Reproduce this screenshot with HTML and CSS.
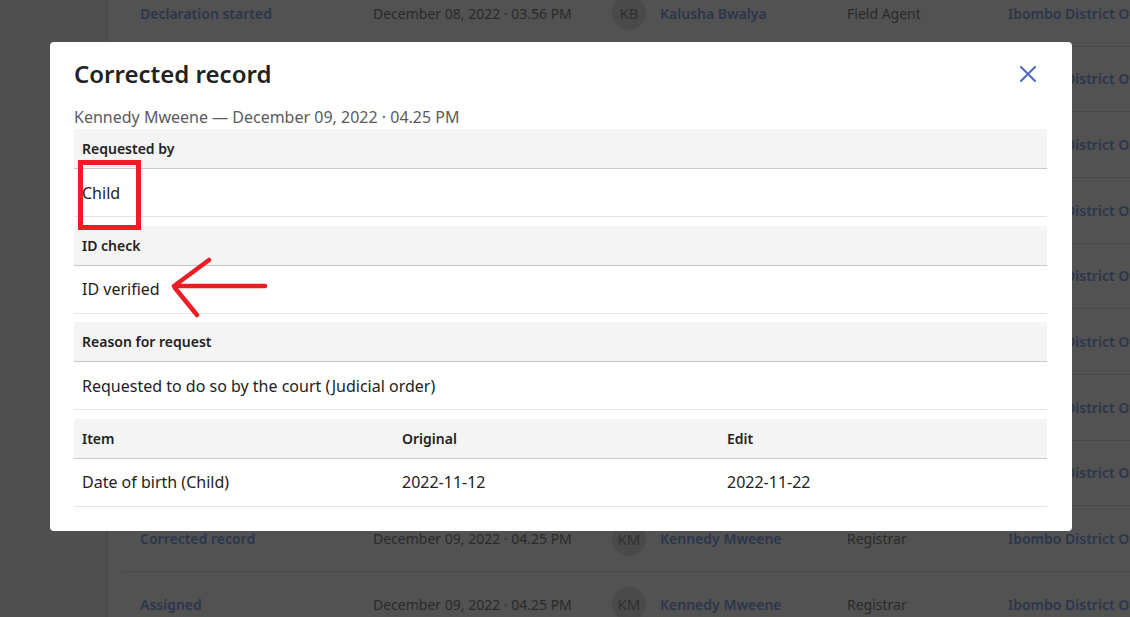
FILE: index.html
```html
<!DOCTYPE html>
<html lang="en">
<head>
<meta charset="utf-8">
<title>Corrected record</title>
<link rel="stylesheet" href="styles.css">
</head>
<body>
<div class="page">
  <aside class="sidebar"></aside>
  <main class="history">
    <div class="list">
      <div class="hrow"><span class="act">Declaration started</span><span class="date">December 08, 2022 · 03.56 PM</span><span class="avatar">KB</span><span class="name">Kalusha Bwalya</span><span class="role">Field Agent</span><span class="office">Ibombo District Office</span></div>
      <div class="hrow"><span class="act">Sent for review</span><span class="date">December 08, 2022 · 04.01 PM</span><span class="avatar">KB</span><span class="name">Kalusha Bwalya</span><span class="role">Field Agent</span><span class="office">Ibombo District Office</span></div>
      <div class="hrow"><span class="act">Assigned</span><span class="date">December 09, 2022 · 04.20 PM</span><span class="avatar">KM</span><span class="name">Kennedy Mweene</span><span class="role">Registrar</span><span class="office">Ibombo District Office</span></div>
      <div class="hrow"><span class="act">Registered</span><span class="date">December 09, 2022 · 04.21 PM</span><span class="avatar">KM</span><span class="name">Kennedy Mweene</span><span class="role">Registrar</span><span class="office">Ibombo District Office</span></div>
      <div class="hrow"><span class="act">Assigned</span><span class="date">December 09, 2022 · 04.22 PM</span><span class="avatar">KM</span><span class="name">Kennedy Mweene</span><span class="role">Registrar</span><span class="office">Ibombo District Office</span></div>
      <div class="hrow"><span class="act">Certified</span><span class="date">December 09, 2022 · 04.23 PM</span><span class="avatar">KM</span><span class="name">Kennedy Mweene</span><span class="role">Registrar</span><span class="office">Ibombo District Office</span></div>
      <div class="hrow"><span class="act">Assigned</span><span class="date">December 09, 2022 · 04.24 PM</span><span class="avatar">KM</span><span class="name">Kennedy Mweene</span><span class="role">Registrar</span><span class="office">Ibombo District Office</span></div>
      <div class="hrow"><span class="act">Record corrected</span><span class="date">December 09, 2022 · 04.24 PM</span><span class="avatar">KM</span><span class="name">Kennedy Mweene</span><span class="role">Registrar</span><span class="office">Ibombo District Office</span></div>
      <div class="hrow"><span class="act">Corrected record</span><span class="date">December 09, 2022 · 04.25 PM</span><span class="avatar">KM</span><span class="name">Kennedy Mweene</span><span class="role">Registrar</span><span class="office">Ibombo District Office</span></div>
      <div class="hrow"><span class="act">Assigned</span><span class="date">December 09, 2022 · 04.25 PM</span><span class="avatar">KM</span><span class="name">Kennedy Mweene</span><span class="role">Registrar</span><span class="office">Ibombo District Office</span></div>
    </div>
  </main>
</div>

<div class="modal">
  <div class="modal-head">
    <h1 class="modal-title">Corrected record</h1>
    <button class="close" aria-label="Close">
      <svg width="16" height="16" viewBox="0 0 16 16"><path d="M1 1 L15 15 M15 1 L1 15" stroke="#4c68c1" stroke-width="2" fill="none" stroke-linecap="square"/></svg>
    </button>
  </div>
  <div class="modal-sub">Kennedy Mweene — December 09, 2022 · 04.25 PM</div>

  <div class="section">
    <div class="sec-head">Requested by</div>
    <div class="sec-row">Child</div>
  </div>
  <div class="section">
    <div class="sec-head">ID check</div>
    <div class="sec-row">ID verified</div>
  </div>
  <div class="section">
    <div class="sec-head">Reason for request</div>
    <div class="sec-row">Requested to do so by the court (Judicial order)</div>
  </div>
  <div class="section">
    <div class="sec-head grid3"><span>Item</span><span>Original</span><span>Edit</span></div>
    <div class="sec-row grid3"><span>Date of birth (Child)</span><span>2022-11-12</span><span>2022-11-22</span></div>
  </div>
</div>

<svg class="annot" width="1130" height="617" viewBox="0 0 1130 617">
  <rect x="80.5" y="162.5" width="58" height="65" fill="none" stroke="#ee1c25" stroke-width="5"/>
  <path d="M265 286 L174 286 M174 286 L209 260 M175 288 L197 315" fill="none" stroke="#ee1c25" stroke-width="4.5" stroke-linecap="round" stroke-linejoin="round"/>
</svg>
</body>
</html>
```

FILE: styles.css
```css
html, body {
  margin: 0;
  padding: 0;
}
body {
  width: 1130px;
  height: 617px;
  overflow: hidden;
  background: #525252;
  font-family: "Noto Sans", "Open Sans", sans-serif;
  color: #222222;
}
.page {
  display: flex;
  height: 617px;
  overflow: hidden;
}
.sidebar {
  width: 107px;
  flex: none;
  background: #4f4f4f;
  border-right: 1px solid #454545;
}
.history {
  flex: 1;
  padding-left: 14px;
  overflow: hidden;
}
.list {
  margin-top: -19px;
}
.hrow {
  display: grid;
  grid-template-columns: 233px 239px 48px 187px 161px 1fr;
  align-items: center;
  box-sizing: border-box;
  height: 65.67px;
  padding-left: 18px;
  border-bottom: 1px solid #4a4a4a;
  white-space: nowrap;
  overflow: hidden;
  font-size: 14px;
}
.act, .name, .office {
  font-weight: 600;
  color: #2c364c;
}
.date, .role {
  color: #2a2a2a;
}
.avatar {
  width: 34px;
  height: 34px;
  border-radius: 50%;
  background: #4a4a4a;
  color: #303030;
  font-size: 15px;
  display: flex;
  align-items: center;
  justify-content: center;
}
.modal {
  position: fixed;
  left: 50px;
  top: 42px;
  width: 1022px;
  box-sizing: border-box;
  padding: 16px 25px 24px 24px;
  background: #ffffff;
  border-radius: 4px;
}
.modal-head {
  display: flex;
  align-items: center;
  justify-content: space-between;
  height: 32px;
}
.modal-title {
  margin: 0;
  font-size: 24px;
  line-height: 32px;
  font-weight: 600;
  color: #222222;
}
.close {
  border: 0;
  background: none;
  padding: 0;
  margin-right: 11px;
  width: 16px;
  height: 16px;
  display: flex;
}
.modal-sub {
  margin-top: 15px;
  font-size: 16px;
  line-height: 24px;
  color: #5b5b5b;
}
.section + .section {
  margin-top: 8.5px;
}
.sec-head {
  height: 39px;
  box-sizing: content-box;
  display: flex;
  align-items: center;
  padding: 0 8px;
  background: #f4f4f4;
  border-bottom: 1px solid #c9c9c9;
  border-radius: 2px 2px 0 0;
  font-size: 14px;
  font-weight: 600;
  color: #222222;
}
.sec-row {
  height: 47px;
  display: flex;
  align-items: center;
  padding: 0 8px;
  border-bottom: 1px solid #e4e4e4;
  font-size: 16px;
  color: #222222;
}
.grid3 {
  display: grid;
  grid-template-columns: 320px 325px 1fr;
  align-items: center;
}
.annot {
  position: fixed;
  left: 0;
  top: 0;
  pointer-events: none;
}
```
